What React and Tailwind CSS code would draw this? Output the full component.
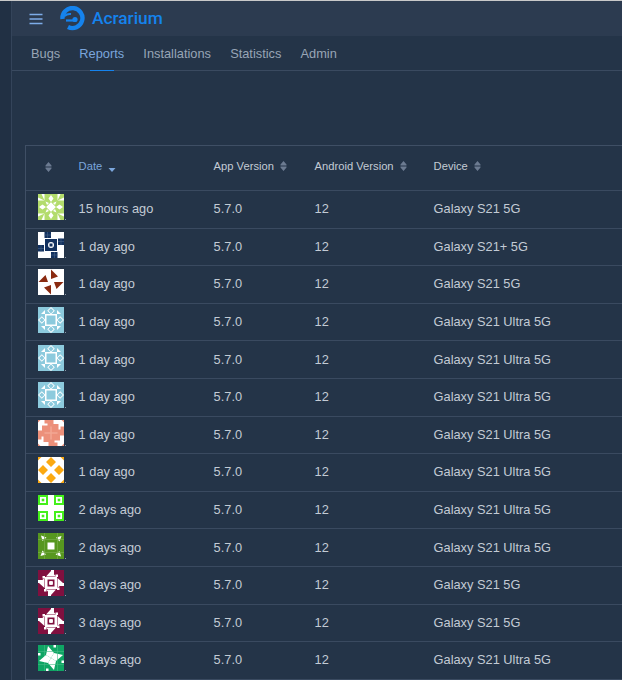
const tabs = ["Bugs", "Reports", "Installations", "Statistics", "Admin"];

// each identicon: colours plus the shapes of one quadrant, which get rotated four times
const icons = {
  lime: {
    bg: "#b3dc6c",
    fg: "#ffffff",
    quad: "M3.5 0H6.5V6.5L0 3.5V6.5H6.5ZM13 1L15.5 4.5L13 8L10.5 4.5ZM13 8.5L17.5 13L13 17.5L8.5 13ZM7.5 7.5L11 9L9 11Z",
  },
  navy: {
    bg: "#ffffff",
    fg: "#12315f",
    quad: "M6.5 0H13V6H6.5ZM7 7H13V10A3 3 0 0 0 10 13H7Z",
    dot: "M11.5 11.5H13V13H11.5Z",
    inner: "M9.5 0V6M6.5 3H13",
    innerStroke: "#4a6488",
  },
  rust: {
    bg: "#ffffff",
    fg: "#8a2a10",
    quad: "M13 0.5L20 7.5L13 10Z",
  },
  sky: {
    bg: "#8ccadd",
    fg: "#ffffff",
    quad: "M7 7H13V8.5H8.5V13H7ZM13 0L16.8 3.8L13 7.6L9.2 3.8ZM3 7L7 3V7Z",
    hole: "M13 1.2L15.6 3.8L13 6.4L10.4 3.8Z",
  },
  coral: {
    bg: "#ec907a",
    fg: "#ffffff",
    quad: "M0 2.5L2.5 0H6.5V3.5H9.5V5.5H4V10.5H0Z",
    inner: "M6.5 13H19.5M13 6.5V19.5",
    innerStroke: "#f3a896",
  },
  orange: {
    bg: "#ffffff",
    fg: "#fba911",
    quad: "M13 0L18 5L13 10L8 5ZM0 0H3.5L0 3.5Z",
  },
  green: {
    bg: "#ffffff",
    fg: "#44f01a",
    quad: "M0 0H10V10H0Z",
    hole: "M2 2H8V8H2Z",
    dot: "M3.7 3.7H6.3V6.3H3.7Z",
  },
  olive: {
    bg: "#57971f",
    fg: "#ffffff",
    quad: "M3 2.5L8.5 4.5L4.5 8ZM9.5 9.5H13V13H9.5Z",
    inner: "M6.5 0V26M0 6.5H26",
    innerStroke: "#74aa45",
  },
  maroon: {
    bg: "#80103f",
    fg: "#ffffff",
    quad: "M13 1L18 6.5H8ZM7 7H19V9.5H7ZM11.5 11.5H14.5V14.5H11.5ZM4.5 6H7V8.5H4.5ZM0 10H4.5V13H0Z",
  },
  emerald: {
    bg: "#0fa564",
    fg: "#ffffff",
    quad: "M13 13L8 10L10 1L16 8ZM15.5 0H18V2.5H15.5Z",
    inner: "M6.5 0V26",
    innerStroke: "#47bb87",
  },
};

const rows = [
  ["lime", "15 hours ago", "Galaxy S21 5G"],
  ["navy", "1 day ago", "Galaxy S21+ 5G"],
  ["rust", "1 day ago", "Galaxy S21 5G"],
  ["sky", "1 day ago", "Galaxy S21 Ultra 5G"],
  ["sky", "1 day ago", "Galaxy S21 Ultra 5G"],
  ["sky", "1 day ago", "Galaxy S21 Ultra 5G"],
  ["coral", "1 day ago", "Galaxy S21 Ultra 5G"],
  ["orange", "1 day ago", "Galaxy S21 Ultra 5G"],
  ["green", "2 days ago", "Galaxy S21 Ultra 5G"],
  ["olive", "2 days ago", "Galaxy S21 Ultra 5G"],
  ["maroon", "3 days ago", "Galaxy S21 5G"],
  ["maroon", "3 days ago", "Galaxy S21 5G"],
  ["emerald", "3 days ago", "Galaxy S21 Ultra 5G"],
];

const columns = "grid grid-cols-[52.6px_135px_101px_119px_1fr] items-center";

function Identicon({ name }) {
  const icon = icons[name];
  return (
    <svg width="28" height="26" viewBox="0 0 28 26" className="block">
      <rect width="26" height="26" fill={icon.bg} />
      {[0, 90, 180, 270].map((angle) => (
        <g key={angle} transform={`rotate(${angle} 13 13)`}>
          <path d={icon.quad} fill={icon.fg} />
          {icon.hole && <path d={icon.hole} fill={icon.bg} />}
          {icon.dot && <path d={icon.dot} fill={icon.fg} />}
          {icon.inner && <path d={icon.inner} fill="none" stroke={icon.innerStroke} strokeWidth="0.6" />}
        </g>
      ))}
      <rect x="27" y="25" width="1" height="1" fill="#8b97a6" />
    </svg>
  );
}

function SortIcon({ active }) {
  if (active) {
    return (
      <svg width="8" height="10" viewBox="0 0 8 10" className="mt-1">
        <path d="M0.5 5H7.5L4 9Z" fill="#7ba6dc" />
      </svg>
    );
  }
  return (
    <svg width="7" height="10" viewBox="0 0 7 10">
      <path d="M3.5 0L6.5 3.5V4.4H0.5V3.5ZM0.5 5.6H6.5V6.5L3.5 10L0.5 6.5Z" fill="#6c7b91" />
    </svg>
  );
}

function Logo() {
  return (
    <svg width="25" height="25" viewBox="0 0 25 25">
      <path d="M2.5 13A10 10 0 1 1 8 21" fill="none" stroke="#1583ee" strokeWidth="4.4" />
      <path d="M6 14.5H14" stroke="#1583ee" strokeWidth="2.2" fill="none" />
      <path d="M4.5 10Q7 7.5 11 8" stroke="#1583ee" strokeWidth="2" fill="none" />
      <circle cx="15" cy="13.5" r="2.6" fill="#1583ee" />
    </svg>
  );
}

function HeaderCell({ label, active }) {
  return (
    <div className={`flex items-center gap-[6px] pb-[3px] ${active ? "text-[#7ba6dc]" : "text-[#c3cbd5]"}`}>
      {label}
      <SortIcon active={active} />
    </div>
  );
}

export default function App() {
  return (
    <div className="h-[680px] w-[622px] overflow-hidden border-t border-[#c9c9c9] bg-[#243448] font-['Liberation_Sans',sans-serif] flex">
      {/* Sidebar */}
      <div className="w-[12px] shrink-0 border-r border-[#34445a] bg-[#213044]" />

      <div className="flex-1 min-w-0">
        {/* Header */}
        <div className="h-[35px] bg-[#2c3b50] flex items-center pl-[17px] gap-[17px]">
          <svg width="14" height="12" viewBox="0 0 14 12">
            <path d="M0.5 1.5H13.5M0.5 6H13.5M0.5 10.5H13.5" stroke="#7dace8" strokeWidth="1.5" />
          </svg>
          <div className="flex items-center gap-[7px]">
            <Logo />
            <span className="font-['Roboto',sans-serif] font-medium text-[17.3px] leading-none text-[#1583ee]">Acrarium</span>
          </div>
        </div>

        {/* Tabs */}
        <div className="h-[35px] border-b border-[#3a4a60] flex gap-[19.2px] pl-[19px] pt-[2px] text-[12.8px]">
          {tabs.map((tab) => (
            <div
              key={tab}
              className={`relative flex items-center ${tab === "Reports" ? "text-[#7ba6dc]" : "text-[#98a5b6]"}`}
            >
              {tab}
              {tab === "Reports" && (
                <div className="absolute bottom-[-1px] left-[11px] w-[24px] h-px bg-[#1583ee]" />
              )}
            </div>
          ))}
        </div>

        {/* Reports table */}
        <div className="mt-[74px] ml-[13px] border-t border-l border-[#3f4f65] text-[12.8px] text-[#c3cbd5]">
          <div className={`${columns} h-[45px] border-b border-[#3a4a60] text-[11.2px]`}>
            <div className="pl-[19px] pb-[3px]">
              <SortIcon />
            </div>
            <HeaderCell label="Date" active />
            <HeaderCell label="App Version" />
            <HeaderCell label="Android Version" />
            <HeaderCell label="Device" />
          </div>
          {rows.map(([icon, date, device], i) => (
            <div key={i} className={`${columns} h-[37.6px] border-b border-[#3a4a60]`}>
              <div className="pl-[12px] pb-[4px]">
                <Identicon name={icon} />
              </div>
              <div className="pb-[0.9px]">{date}</div>
              <div className="pb-[0.9px]">5.7.0</div>
              <div className="pb-[0.9px]">12</div>
              <div className="pb-[0.9px]">{device}</div>
            </div>
          ))}
        </div>
      </div>
    </div>
  );
}
